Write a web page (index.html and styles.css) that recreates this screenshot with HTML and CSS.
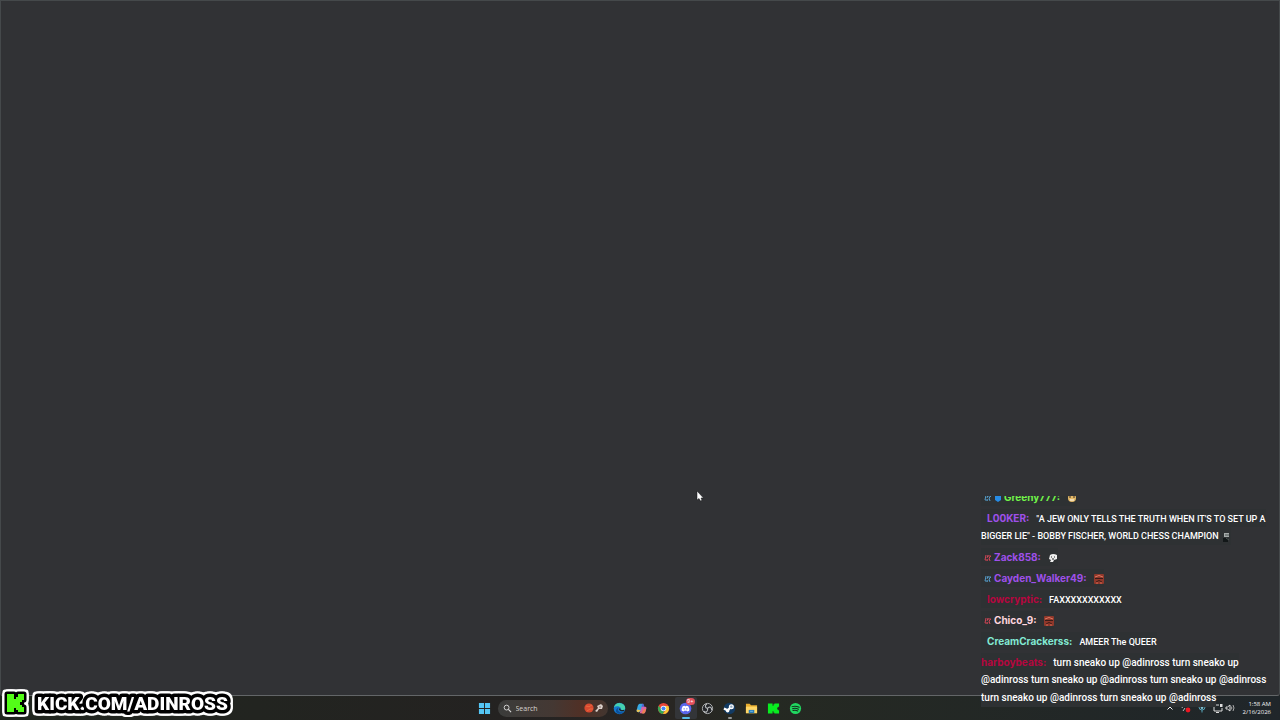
FILE: index.html
```
<!DOCTYPE html>
<html lang="en">
<head>
    <meta charset="UTF-8">
    <meta name="viewport" content="width=device-width, initial-scale=1.0">
    <title>Desktop stream</title>
    <link rel="stylesheet" href="styles.css">
</head>
<body>

<!-- Shared emote drawings -->
<svg class="defs" aria-hidden="true">
    <symbol id="badge" viewBox="0 0 8 8">
        <path d="M2 1L1 6H3M4 1L3 4M4 2H7L5 4M5 4L6 7M3 7L4 5" fill="none" stroke="currentColor" stroke-width="1"/>
    </symbol>
    <symbol id="fire" viewBox="0 0 10 10">
        <rect width="10" height="10" rx="1" fill="#8f382b"/>
        <path d="M1 3Q5 0 9 3" stroke="#e27962" fill="none"/>
        <path d="M1 4.5H9M2 8Q5 5 8 8" stroke="#3a1b18" stroke-width="1" fill="none"/>
        <path d="M2 9H4M6 9H8" stroke="#df6650"/>
    </symbol>
</svg>

<div class="desktop">
    <main class="window"></main>

    <footer class="taskbar">
        <nav class="apps">
            <button class="app" aria-label="Start">
                <svg viewBox="0 0 14 14"><path d="M1 1H6.5V6.5H1ZM7.5 1H13V6.5H7.5ZM1 7.5H6.5V13H1ZM7.5 7.5H13V13H7.5Z" fill="#54c6f5"/></svg>
            </button>
            <label class="search">
                <svg class="glass" viewBox="0 0 10 10"><circle cx="4" cy="4" r="2.7" fill="none" stroke="#ddd"/><path d="M6 6L9 9" stroke="#ddd" stroke-width="1.2"/></svg>
                <input type="text" placeholder="Search" aria-label="Search">
                <svg class="highlight" viewBox="0 0 20 10">
                    <circle cx="5" cy="5" r="4.6" fill="#d94a30"/>
                    <path d="M2 3Q5 5 8 2M3 8Q6 5 9 6" stroke="#e8683f" fill="none"/>
                    <path d="M11 8L14 5L13 3L17 1L19 3L18 6L15 6L13 9Z" fill="#d9cfca"/>
                    <circle cx="16" cy="4" r=".7" fill="#6b4c42"/>
                </svg>
            </label>
            <button class="app" aria-label="Edge">
                <svg viewBox="0 0 14 14">
                    <circle cx="7" cy="7" r="6.2" fill="#1478cb"/>
                    <path d="M1 6C2 1 7 0 10 2C14 4 14 9 11 9C8 9 9 7 8 6C6 4 3 4 1 6Z" fill="#45d0b0"/>
                    <path d="M6 6C4 8 6 12 11 11C9 13 7 13 5 12C2 11 3 7 6 6Z" fill="#0b4f9b"/>
                    <path d="M7 7Q7 10 12 9" fill="none" stroke="#202425" stroke-width="1.5"/>
                </svg>
            </button>
            <button class="app" aria-label="Copilot">
                <svg viewBox="0 0 14 14">
                    <path d="M5 2H9L7 9Q6 11 4 11Q1 11 2 8L3 4Q4 2 5 2" fill="#36a8e3"/>
                    <path d="M8 2Q9 2 10 5H11Q13 5 12 8L11 11Q10 13 8 12H5L7 6Z" fill="#d864a5"/>
                    <path d="M2 8L6 9L4 11Q1 11 2 8" fill="#efc352"/>
                    <path d="M8 2Q10 2 10 5H7Z" fill="#4666d7"/>
                    <path d="M9 8L12 7L11 11Q10 13 7 12Z" fill="#ed8052"/>
                </svg>
            </button>
            <button class="app" aria-label="Chrome">
                <svg viewBox="0 0 14 14">
                    <circle cx="7" cy="7" r="6" fill="#e84637"/>
                    <path d="M1.8 4L5 8.5L8 9L6.5 13A6 6 0 0 1 1.8 4" fill="#35a853"/>
                    <path d="M7 4.2H12.3A6 6 0 0 1 6.5 13L9.5 8.5Z" fill="#f8c933"/>
                    <circle cx="7" cy="7" r="3" fill="#fff"/><circle cx="7" cy="7" r="2.2" fill="#4285f4"/>
                </svg>
            </button>
            <button class="app active" aria-label="Discord">
                <svg viewBox="0 0 14 14">
                    <circle cx="7" cy="7" r="6.3" fill="#5966eb"/>
                    <path d="M4 4.5L6 4L6.5 4.6H7.5L8 4L10 4.5Q11.5 7 11 9.3L9 10.2L8.4 9.3H5.6L5 10.2L3 9.3Q2.5 7 4 4.5" fill="#fff"/>
                    <circle cx="5.5" cy="7.4" r=".8" fill="#5966eb"/><circle cx="8.5" cy="7.4" r=".8" fill="#5966eb"/>
                </svg>
                <span class="count">9+</span>
            </button>
            <button class="app" aria-label="OBS Studio">
                <svg viewBox="0 0 14 14">
                    <circle cx="7" cy="7" r="5.5" fill="#242629" stroke="#b5b8b9"/>
                    <path d="M7 7C4 6 4 3 6.5 2M7 7C9 4 12 6 11.5 9M7 7C8 10 5 12 3 10" fill="none" stroke="#b5b8b9" stroke-width="1.3"/>
                </svg>
            </button>
            <button class="app running" aria-label="Steam">
                <svg viewBox="0 0 14 14">
                    <circle cx="7" cy="7" r="6.2" fill="#123a62"/>
                    <path d="M1 7L5 9L8 6" fill="none" stroke="#fff" stroke-width="2.4"/>
                    <circle cx="9" cy="5" r="2.7" fill="#fff"/><circle cx="9" cy="5" r="1.3" fill="#8ba6bd"/>
                    <circle cx="5" cy="9.3" r="1.9" fill="#fff"/>
                </svg>
            </button>
            <button class="app" aria-label="File Explorer">
                <svg viewBox="0 0 14 14">
                    <path d="M1 2H5L6.5 3.5H13V12H1Z" fill="#e9ae2f"/><path d="M1 5H13V12H1Z" fill="#ffd766"/>
                    <path d="M4 12V8.5H10V12" fill="#287bb9"/><path d="M5.5 10H8.5" stroke="#79bfe4"/>
                </svg>
            </button>
            <button class="app" aria-label="Kick">
                <svg viewBox="0 0 14 14"><path d="M1 1.5H6V4H7V2.5H8V1.5H13V5H12V6H11V8H12V9H13V12.5H8V11.5H7V10H6V12.5H1Z" fill="#08ed20"/></svg>
            </button>
            <button class="app" aria-label="Spotify">
                <svg viewBox="0 0 14 14">
                    <circle cx="7" cy="7" r="6" fill="#20d760"/>
                    <path d="M3.3 5Q7 3.7 11 5.7M3.8 7.2Q7 6.1 10.2 7.8M4.3 9.2Q7 8.3 9.4 9.7" fill="none" stroke="#152b1d" stroke-width="1.1" stroke-linecap="round"/>
                </svg>
            </button>
        </nav>

        <div class="tray">
            <svg viewBox="0 0 10 10"><path d="M2.5 6.5L5 4L7.5 6.5" fill="none" stroke="#eee"/></svg>
            <svg viewBox="0 0 10 10"><path d="M1 5Q2 1 6 2L8 3M8 1V3H6M2 8L4 5" fill="none" stroke="#b8bdbd"/><circle cx="7" cy="7" r="2.4" fill="#ef1722"/></svg>
            <svg viewBox="0 0 10 10"><rect x="3.7" y="1" width="2.6" height="5" rx="1.3" fill="#7dbfd2"/><path d="M2 4Q2 7 5 7Q8 7 8 4M5 7V9.5" fill="none" stroke="#55a0b5"/></svg>
            <svg viewBox="0 0 10 10"><path d="M6 2H1V8H9V5M3 9.5H6" fill="none" stroke="#ddd"/><rect x="7" y="1" width="2.5" height="3" fill="#ddd"/></svg>
            <svg viewBox="0 0 10 10"><path d="M1 4H2.5L5 2V8L2.5 6H1Z" fill="none" stroke="#ddd"/><path d="M6.3 3.5Q7.5 5 6.3 6.5M8 2Q10 5 8 8" fill="none" stroke="#aaa"/></svg>
            <time class="clock" datetime="2026-02-16T01:58">1:58 AM<br>2/16/2026</time>
        </div>
    </footer>
</div>

<!-- Chat over the desktop -->
<section class="chat" aria-label="Chat">
    <p class="row"><span class="line inset"><svg class="badge blue"><use href="#badge"/></svg><svg class="badge" viewBox="0 0 8 8"><path d="M4 0L7 2V6L4 8L1 6V2Z" fill="#278be4"/></svg><b class="lime">Greeny777:</b><svg class="emote" viewBox="0 0 10 10"><circle cx="5" cy="5" r="4" fill="#e4b967"/><path d="M2 4H4M6 4H8" stroke="#402e22"/><path d="M3 7H7" stroke="#fff"/></svg></span></p>
    <p class="row caps"><span class="line name"><b class="purple">L00KER:</b>"A JEW ONLY TELLS THE TRUTH WHEN IT'S TO SET UP A</span><br><span class="line">BIGGER LIE" - BOBBY FISCHER, WORLD CHESS CHAMPION <svg class="emote" viewBox="0 0 10 10"><path d="M3 1H8V5H3Z" fill="#a5aaa9"/><path d="M2 6H7V10H2Z" fill="#121718"/><path d="M4 3H8M5 6L8 8" stroke="#4c5554"/></svg></span></p>
    <p class="row"><span class="line inset"><svg class="badge red"><use href="#badge"/></svg><b class="purple">Zack858:</b><svg class="emote" viewBox="0 0 10 10"><path d="M2 2Q5 0 9 2V6L6 7L5 9H2L3 7L1 6Z" fill="#eee"/><path d="M3 4H4M6 4H7M4 6H6" stroke="#222"/></svg></span></p>
    <p class="row"><span class="line inset"><svg class="badge blue"><use href="#badge"/></svg><b class="purple">Cayden_Walker49:</b><svg class="emote"><use href="#fire"/></svg></span></p>
    <p class="row caps"><span class="line name"><b class="crimson">lowcryptic:</b>FAXXXXXXXXXXX</span></p>
    <p class="row"><span class="line inset"><svg class="badge red"><use href="#badge"/></svg><b class="pink">Chico_9:</b><svg class="emote"><use href="#fire"/></svg></span></p>
    <p class="row caps"><span class="line name"><b class="mint">CreamCrackerss:</b>AMEER The QUEER</span></p>
    <p class="row"><span class="line"><b class="crimson">harboybeats:</b>turn sneako up @adinross turn sneako up</span><br><span class="line">@adinross turn sneako up @adinross turn sneako up @adinross</span><br><span class="line">turn sneako up @adinross turn sneako up @adinross</span></p>
</section>

<!-- Channel banner -->
<a class="banner" href="#">
    <svg class="banner-logo" viewBox="0 0 20 22"><path d="M2 2H9V7H11V5H13V2H19V8H17V10H15V13H17V15H19V20H13V18H11V16H9V20H2Z" fill="#53fc18" stroke="#000" stroke-width="5" stroke-linejoin="round" paint-order="stroke"/></svg>
    <svg class="banner-title" role="img" aria-label="KICK.COM/ADINROSS"><text x="3" y="20">KICK.COM/ADINROSS</text></svg>
</a>

<svg class="cursor" viewBox="0 0 8 12" aria-hidden="true"><path d="M1 1V10L3 8.5L4.5 11L6 10.3L5 8H7.5Z" fill="#fff" stroke="#151719" stroke-width=".5"/></svg>

</body>
</html>
```
FILE: styles.css
```
* {
    box-sizing: border-box;
}

body {
    margin: 0;
    background: #202425;
    color: #f2f2f2;
    font-family: Inter, "Liberation Sans", sans-serif;
    overflow: hidden;
}

button,
input {
    border: 0;
    padding: 0;
    background: none;
    color: inherit;
    font: inherit;
}

.defs {
    position: absolute;
    width: 0;
    height: 0;
}

/* Desktop */
.desktop {
    display: flex;
    flex-direction: column;
    height: 100vh;
}

.window {
    flex: 1;
    background: #313235;
    border: 1px solid #45494b;
    border-bottom-color: #636668;
    border-radius: 0 0 3px 3px;
}

/* Taskbar */
.taskbar {
    display: grid;
    grid-template-columns: 1fr auto 1fr;
    align-items: center;
    height: 24px;
    background: linear-gradient(90deg, #20261f, #242221 40%, #292523 50%, #252922 60%, #20262a);
}

.apps {
    grid-column: 2;
    display: flex;
    align-items: center;
}

.app {
    position: relative;
    display: flex;
    justify-content: center;
    align-items: center;
    width: 22px;
    height: 22px;
}

.app svg {
    width: 13px;
    height: 13px;
}

.active {
    background: #333538;
    border-radius: 2px;
}

.active::after,
.running::after {
    content: "";
    position: absolute;
    bottom: 0;
    width: 8px;
    height: 2px;
    border-radius: 1px;
    background: #55bde9;
}

.running::after {
    width: 4px;
    background: #929697;
}

.count {
    position: absolute;
    top: 1px;
    right: 2px;
    padding: 0 1px;
    border-radius: 4px;
    background: #e3515d;
    color: #fff;
    font-size: 5px;
    line-height: 7px;
}

.search {
    display: flex;
    align-items: center;
    gap: 4px;
    width: 110px;
    height: 17px;
    margin: 0 1px 0 2px;
    padding: 0 4px 0 5px;
    border-radius: 9px;
    background: linear-gradient(90deg, #3b3c3b, #443833 50%, #503026 75%, #423630);
}

.search input {
    flex: 1;
    min-width: 0;
    font-family: "Open Sans", sans-serif;
    font-size: 7px;
}

.search input::placeholder {
    color: #d6d3d0;
    opacity: 1;
}

.glass {
    width: 9px;
    height: 9px;
}

.highlight {
    width: 20px;
    height: 10px;
}

.tray {
    display: flex;
    justify-content: flex-end;
    align-items: center;
    gap: 6px;
    padding-right: 9px;
}

.tray svg {
    width: 10px;
    height: 10px;
}

.tray svg:nth-of-type(4) {
    margin-right: -4px;
}

.clock {
    min-width: 30px;
    font-family: "Open Sans", sans-serif;
    font-size: 6px;
    line-height: 8px;
    text-align: right;
}

/* Chat overlay */
.chat {
    position: absolute;
    right: 0;
    bottom: 13px;
    display: flex;
    flex-direction: column;
    justify-content: flex-end;
    gap: 3px;
    width: 299px;
    height: 211px;
    overflow: hidden;
    font-family: Roboto, sans-serif;
    font-size: 10px;
    font-weight: 500;
    line-height: 18px;
    color: #fff;
    white-space: nowrap;
}

.row {
    margin: 0;
}

.caps {
    font-size: 9px;
}

.line {
    display: inline-block;
    height: 18px;
    background: #2e3133;
    vertical-align: top;
}

.name {
    padding-left: 6px;
}

.inset {
    padding-left: 3px;
}

.line b {
    margin-right: 7px;
    font-family: Inter, sans-serif;
    font-size: 10px;
    font-weight: 700;
}

.badge {
    width: 8px;
    height: 8px;
    margin-right: 2px;
    vertical-align: middle;
}

.emote {
    width: 10px;
    height: 10px;
    vertical-align: middle;
}

.red { color: #ce4555; }
.blue { color: #559bc8; }
.lime { color: #72f34a; }
.purple { color: #9f50ea; }
.crimson { color: #b5063f; }
.pink { color: #ffd6df; }
.mint { color: #82ead3; }

/* Channel banner */
.banner {
    position: absolute;
    left: 5px;
    bottom: 4px;
    display: flex;
    align-items: center;
    gap: 9px;
    text-decoration: none;
    filter: drop-shadow(2px 0 #fff) drop-shadow(-2px 0 #fff) drop-shadow(0 2px #fff) drop-shadow(0 -2px #fff);
}

.banner-logo {
    width: 20px;
    height: 22px;
    overflow: visible;
}

.banner-title {
    width: 200px;
    height: 26px;
    overflow: visible;
    font-family: Roboto, sans-serif;
    font-size: 19px;
    font-weight: 900;
    fill: #fff;
    stroke: #000;
    stroke-width: 7px;
    stroke-linejoin: round;
    paint-order: stroke;
}

.cursor {
    position: absolute;
    left: 54.4%;
    top: 68%;
    width: 8px;
    height: 12px;
}
```
